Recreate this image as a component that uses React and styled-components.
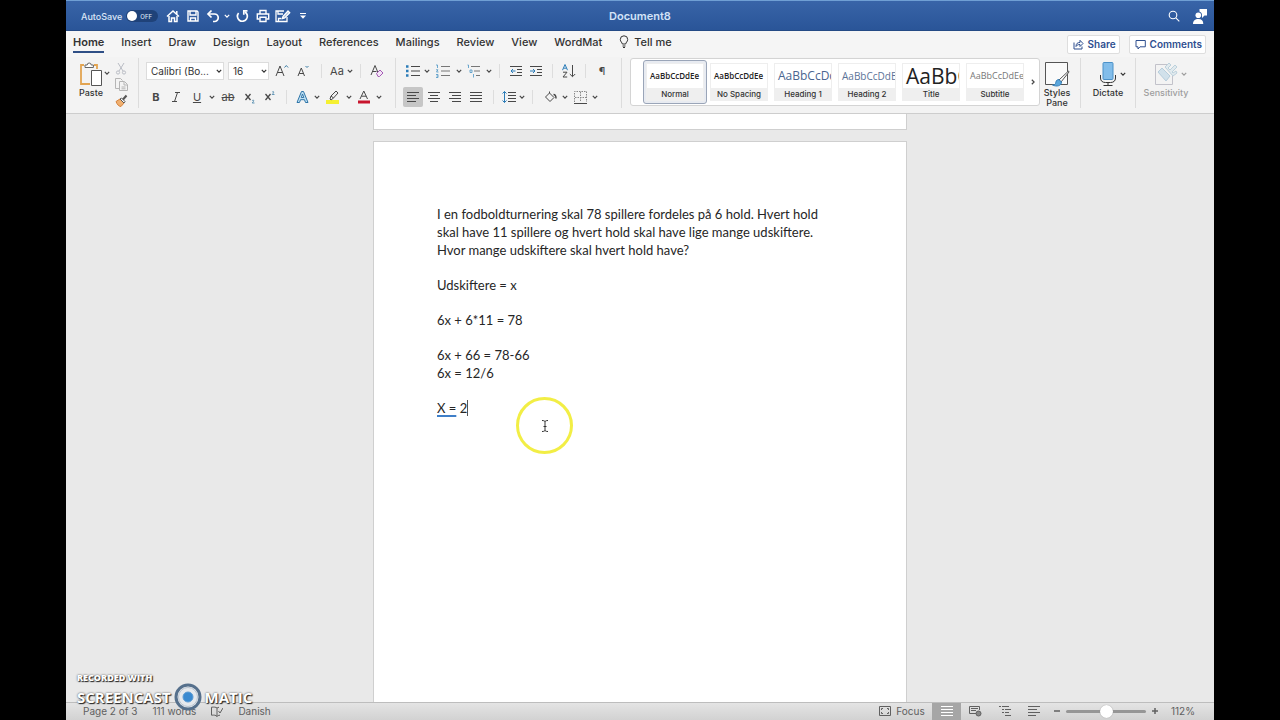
import React, { useState } from 'react';
import styled, { createGlobalStyle } from 'styled-components';

const GlobalStyle = createGlobalStyle`
    * {
        box-sizing: border-box;
    }

    body {
        margin: 0;
        background: #000000;
        font-family: Inter, "Liberation Sans", sans-serif;
    }

    button, select, input {
        margin: 0;
        padding: 0;
        border: 0;
        background: none;
        color: inherit;
        font: inherit;
    }
`;

const Screen = styled.div`
    height: 100vh;
    padding: 0 66px;
    overflow: hidden;
`;

const Window = styled.div`
    position: relative;
    display: flex;
    flex-direction: column;
    height: 100%;
    background: #e9e9e9;
    color: #333333;
`;

// title bar

const TitleBar = styled.header`
    display: grid;
    grid-template-columns: 1fr auto 1fr;
    align-items: center;
    height: 31px;
    padding: 1px 4px 0;
    border-top: 1px solid #6f9fd4;
    border-bottom: 1px solid #244a85;
    background: linear-gradient(#3864a8, #2a5598);
    color: #ffffff;
`;

const QuickAccess = styled.div`
    display: flex;
    align-items: center;
    padding-left: 11px;
`;

const AutoSave = styled.label`
    display: flex;
    align-items: center;
    gap: 4px;
    margin-right: 5px;
    font-size: 9px;
    font-weight: 500;
    color: #dbe6f6;
`;

const Track = styled.span`
    display: flex;
    align-items: center;
    gap: 3px;
    width: 32px;
    height: 12px;
    padding: 0 1px;
    border-radius: 6px;
    background: #1f4279;
    font-size: 6px;
`;

const Knob = styled.input`
    appearance: none;
    width: 10px;
    height: 10px;
    border-radius: 50%;
    background: #ffffff;
`;

const DocumentTitle = styled.h1`
    margin: 0;
    font-size: 11px;
    font-weight: 600;
    color: #d3e3f8;
`;

const TitleActions = styled.div`
    display: flex;
    justify-content: flex-end;
    gap: 6px;
`;

// tabs

const TabBar = styled.div`
    display: flex;
    align-items: center;
    justify-content: space-between;
    height: 26px;
    padding: 0 8px 0 7px;
    background: #f5f5f5;
`;

const Tabs = styled.nav`
    display: flex;
    gap: 17px;
    height: 100%;
`;

const Tab = styled.a`
    display: flex;
    align-items: center;
    gap: 5px;
    height: 22px;
    padding-top: 1px;
    border-bottom: 2px solid ${(props) => (props.$active ? '#2f4f86' : 'transparent')};
    font-size: 11px;
    font-weight: ${(props) => (props.$active ? 600 : 500)};
    color: #333333;
    text-decoration: none;
    white-space: nowrap;
`;

const TabActions = styled.div`
    display: flex;
    gap: 9px;
`;

const ActionButton = styled.button`
    display: flex;
    align-items: center;
    gap: 4px;
    height: 19px;
    padding: 0 3px 0 5px;
    border: 1px solid #dedede;
    border-radius: 2px;
    background: #ffffff;
    font-size: 10px;
    font-weight: 600;
    color: #2f4f8f;
`;

// ribbon

const Ribbon = styled.div`
    display: flex;
    height: 57px;
    padding: 1px 0 0 13px;
    border-bottom: 1px solid #cdcdcd;
    background: #f3f3f3;
`;

const Separator = styled.div`
    flex: none;
    width: 1px;
    height: 50px;
    background: #dcdcdc;
`;

const Clipboard = styled.div`
    display: flex;
    align-items: flex-start;
    width: 59px;
`;

const ClipboardSide = styled.div`
    display: flex;
    flex-direction: column;
    gap: 2px;
    padding: 3px 0 0 3px;
`;

const BigButton = styled.button`
    flex: none;
    display: flex;
    flex-direction: column;
    align-items: center;
    width: ${(props) => props.$width}px;
    padding-top: 2px;
    font-size: 9px;
    line-height: 10px;
    font-weight: 500;
    opacity: ${(props) => (props.$disabled ? 0.45 : 1)};
`;

const BigIcon = styled.span`
    display: grid;
    grid-template-columns: 1fr auto 1fr;
    align-items: center;
    gap: 3px;
    height: 28px;

    svg:first-child {
        grid-column: 2;
    }
`;

const PaneHolder = styled.div`
    flex: none;
    width: 40px;
`;

const Group = styled.div`
    flex: none;
    display: flex;
    flex-direction: column;
    gap: 6px;
    width: ${(props) => props.$width}px;
    padding: 3px 0 0 7px;
`;

const ToolRow = styled.div`
    display: flex;
    align-items: center;
    height: 20px;
`;

const Tool = styled.button`
    flex: none;
    display: flex;
    align-items: center;
    justify-content: center;
    width: ${(props) => props.$width || 20}px;
    height: ${(props) => props.$height || 20}px;
    border-radius: 2px;
    background: ${(props) => (props.$active ? '#c6c6c6' : 'none')};
    color: #484848;
    font-size: 11px;
`;

const Divider = styled.span`
    flex: none;
    width: 1px;
    height: 14px;
    margin: 0 6px;
    background: #dddddd;
`;

const SelectBox = styled.label`
    display: flex;
    align-items: center;
    width: ${(props) => props.$width}px;
    height: 18px;
    margin-right: 4px;
    padding-right: 1px;
    border: 1px solid #dcdcdc;
    background: #ffffff;
`;

const Select = styled.select`
    appearance: none;
    flex: 1;
    min-width: 0;
    padding-left: 4px;
    font-size: 10px;
    outline: none;
`;

const Gallery = styled.div`
    flex: none;
    display: flex;
    align-items: center;
    height: 48px;
    margin-left: 8px;
    padding-left: 12px;
    border: 1px solid #d4d4d4;
    border-radius: 3px;
    background: #ffffff;
`;

const StyleButton = styled.button`
    display: flex;
    flex-direction: column;
    width: 64px;
    height: 44px;
    padding: 2px;
    border: 1px solid ${(props) => (props.$active ? '#9aa5b8' : 'transparent')};
    border-radius: 3px;
    background: ${(props) => (props.$active ? '#e8ebf1' : 'none')};
`;

const Preview = styled.span`
    display: flex;
    align-items: center;
    width: 100%;
    height: 25px;
    padding-left: 3px;
    border: 1px solid #eeeeee;
    border-bottom: 0;
    background: #ffffff;
    color: ${(props) => props.$color};
    font-family: "Open Sans", sans-serif;
    font-size: ${(props) => props.$size}px;
    font-weight: ${(props) => props.$weight};
    line-height: 24px;
    white-space: nowrap;
    overflow: hidden;
`;

const StyleName = styled.span`
    width: 100%;
    height: 13px;
    background: #efefef;
    font-size: 8px;
    line-height: 12px;
    font-weight: 500;
    text-align: center;
`;

// document

const Canvas = styled.main`
    position: relative;
    flex: 1;
    min-height: 0;
    display: flex;
    flex-direction: column;
    align-items: center;
    gap: 11px;
    overflow: hidden;
`;

const PageEnd = styled.div`
    flex: none;
    width: 534px;
    height: 16px;
    border: 1px solid #cfcfcf;
    border-top: 0;
    background: #ffffff;
`;

const Page = styled.article`
    flex: 1;
    width: 534px;
    padding: 63px 63px 0;
    border: 1px solid #cfcfcf;
    border-bottom: 0;
    background: #ffffff;
    color: #262626;
    font-family: Lato, "Open Sans", sans-serif;
    font-size: 13px;
    line-height: 18px;
`;

const Paragraph = styled.p`
    margin: 0 0 17px;
    white-space: pre-line;
`;

const Grammar = styled.span`
    text-decoration: underline 2px #3f7fc8;
    text-underline-offset: 2px;
    text-decoration-skip-ink: none;
`;

const Caret = styled.span`
    border-right: 1px solid #555555;
`;

const Pointer = styled.div`
    position: absolute;
    top: 283px;
    left: 450px;
    display: flex;
    align-items: center;
    justify-content: center;
    width: 57px;
    height: 57px;
    border: 3px solid #f2ee45;
    border-radius: 50%;
`;

// status bar

const StatusBar = styled.footer`
    display: flex;
    align-items: center;
    justify-content: space-between;
    height: 18px;
    padding: 0 19px 0 17px;
    border-top: 1px solid #bdbdbd;
    background: linear-gradient(#e4e4e4, #d2d2d2);
    color: #606060;
    font-size: 10px;
`;

const StatusGroup = styled.div`
    display: flex;
    align-items: center;
    height: 100%;
    gap: ${(props) => props.$gap || 0}px;
`;

const StatusButton = styled.button`
    display: flex;
    align-items: center;
    justify-content: center;
    gap: 5px;
    width: ${(props) => (props.$width ? `${props.$width}px` : 'auto')};
    height: 100%;
    padding-bottom: 1px;
    background: ${(props) => (props.$active ? '#a6a6a6' : 'none')};
    color: ${(props) => (props.$active ? '#ffffff' : '#606060')};
    white-space: nowrap;
`;

const ZoomSlider = styled.input`
    appearance: none;
    width: 80px;
    height: 12px;

    &::-webkit-slider-runnable-track {
        height: 3px;
        border-radius: 2px;
        background: #969696;
    }

    &::-webkit-slider-thumb {
        appearance: none;
        width: 13px;
        height: 13px;
        margin-top: -5px;
        border-radius: 50%;
        background: #ffffff;
        box-shadow: 0 0 1px #888888;
    }
`;

const ZoomValue = styled.span`
    width: 31px;
    padding-bottom: 1px;
    text-align: right;
`;

const Watermark = styled.div`
    position: absolute;
    left: 11px;
    bottom: 9px;
    color: #ffffff;
    font-family: "Open Sans", sans-serif;
    text-shadow: 1px 1px 1px #222222, 0 0 2px #444444;
    pointer-events: none;
`;

const WatermarkTop = styled.div`
    font-size: 9px;
    line-height: 10px;
    font-weight: 800;
`;

const WatermarkName = styled.div`
    display: flex;
    align-items: center;
    gap: 3px;
    height: 28px;
    font-size: 15px;
    font-weight: 700;
`;

const Svg = styled.svg`
    flex: none;
    display: block;
    fill: none;
    stroke: currentColor;
    stroke-width: ${(props) => props.$stroke || 1};
`;

function Icon({ w = 16, h = 16, stroke, children }) {
    return (
        <Svg width={w} height={h} viewBox={`0 0 ${w} ${h}`} $stroke={stroke} aria-hidden="true">
            {children}
        </Svg>
    );
}

function Chevron() {
    return <Icon w={6} h={6} stroke={1.2}><path d="M.8 1.8 3 4.1l2.2-2.3" /></Icon>;
}

function More({ label, height }) {
    return <Tool $width={8} $height={height} aria-label={`${label} options`}><Chevron /></Tool>;
}

const styles = [
    { name: 'Normal', color: '#222222', size: 8, weight: 600 },
    { name: 'No Spacing', color: '#222222', size: 8, weight: 600 },
    { name: 'Heading 1', color: '#4a6590', size: 12, weight: 400 },
    { name: 'Heading 2', color: '#5b7398', size: 10, weight: 400 },
    { name: 'Title', color: '#222222', size: 21, weight: 400 },
    { name: 'Subtitle', color: '#777777', size: 9, weight: 400 },
];

const tabs = ['Home', 'Insert', 'Draw', 'Design', 'Layout', 'References', 'Mailings', 'Review', 'View', 'WordMat'];

function Title() {
    return (
        <TitleBar>
            <QuickAccess>
                <AutoSave>
                    AutoSave
                    <Track><Knob type="checkbox" role="switch" />OFF</Track>
                </AutoSave>
                <Tool aria-label="Home">
                    <Icon w={14} h={14} stroke={1.5}><g stroke="#fff"><path d="M1 7.5 7 2l6 5.5M10.8 2v3" /><path d="M3 7v5.5h2.5V9h3v3.5H11V7" /></g></Icon>
                </Tool>
                <Tool aria-label="Save">
                    <Icon w={12} h={12} stroke={1.4}><g stroke="#fff"><path d="M1 1h9l1 1v9H1z" /><path d="M3 1v4h6V1M3.5 11V8h5v3" /></g></Icon>
                </Tool>
                <Tool aria-label="Undo">
                    <Icon w={14} h={14} stroke={1.7}><g stroke="#fff"><path d="M5.5 1.5 2 5l3.5 3.5" /><path d="M2 5h6.5a3.5 3.5 0 0 1 0 7.5H7" /></g></Icon>
                </Tool>
                <Tool $width={8} aria-label="Undo options">
                    <Icon w={6} h={6} stroke={1.2}><path stroke="#fff" d="M.8 1.8 3 4.1l2.2-2.3" /></Icon>
                </Tool>
                <Tool $width={22} aria-label="Redo">
                    <Icon w={14} h={14} stroke={1.7}><g stroke="#fff"><path d="M3.6 4A5 5 0 1 0 10 3" /><path d="M12.5 1.8H8.8v4" /></g></Icon>
                </Tool>
                <Tool aria-label="Print">
                    <Icon w={14} h={14} stroke={1.4}><g stroke="#fff"><path d="M4 5V1.5h6V5M3.5 10H1.3V5h11.4v5h-2.2" /><path d="M4 8.2h6v4.3H4z" /></g></Icon>
                </Tool>
                <Tool aria-label="Edit">
                    <Icon w={16} h={14} stroke={1.3}><g stroke="#fff"><path d="M9 2H1v10.5h11V8M3 2v3h5M3.5 12.5v-3h3" /><path d="m7.5 9.5.6-2.3L13 2l1.7 1.7-5 5.2z" fill="#fff" fillOpacity=".6" /></g></Icon>
                </Tool>
                <Tool aria-label="Customize toolbar">
                    <Icon w={8} h={8}><path stroke="#fff" d="M1 1.5h6" /><path d="M1 3.5h6L4 6.8z" fill="#fff" stroke="none" /></Icon>
                </Tool>
            </QuickAccess>
            <DocumentTitle>Document8</DocumentTitle>
            <TitleActions>
                <Tool aria-label="Search">
                    <Icon w={12} h={12} stroke={1.1}><g stroke="#fff"><circle cx="5" cy="5" r="3.8" /><path d="m7.8 7.8 3.5 3.5" /></g></Icon>
                </Tool>
                <Tool aria-label="Account">
                    <Icon w={14} h={15}><g fill="#fff" stroke="none"><path d="M6.5 0H14v6.5h-2.5L9 9V6.5a4 4 0 0 0-2.5-4z" /><circle cx="5.3" cy="6.3" r="2.8" /><path d="M0 15c0-3.5 2-5 5.3-5s5 1.5 5 5z" /></g></Icon>
                </Tool>
            </TitleActions>
        </TitleBar>
    );
}

function TabStrip() {
    return (
        <TabBar>
            <Tabs>
                {tabs.map((tab, i) => (
                    <Tab key={tab} href={`#${tab}`} $active={i === 0}>{tab}</Tab>
                ))}
                <Tab href="#tell-me">
                    <Icon w={10} h={13}><path d="M3.3 9c0-1.5-2-2.3-2-4.5a3.7 3.7 0 0 1 7.4 0c0 2.2-2 3-2 4.5zM3.5 11h3M4 12.5h2" /></Icon>
                    Tell me
                </Tab>
            </Tabs>
            <TabActions>
                <ActionButton>
                    <Icon w={11} h={11}><path d="M1 3.5V10h8V7.5M3 7.5c0-3 1.5-4 4-4V1.3l3 3.2-3 3v-2C5 5.5 4 6 3 7.5z" /></Icon>
                    Share
                </ActionButton>
                <ActionButton>
                    <Icon w={11} h={11}><path d="M1 1.5h9.3v6.3H5L3 10V7.8H1z" /></Icon>
                    Comments
                </ActionButton>
            </TabActions>
        </TabBar>
    );
}

function ClipboardGroup() {
    return (
        <Clipboard>
            <BigButton $width={24}>
                <BigIcon>
                    <Icon w={24} h={26}>
                        <path d="M5 4H2v19h9M15 4h3v4" stroke="#e3a552" strokeWidth="1.8" />
                        <path d="M6 6.5V4h2.2a2 2 0 0 1 4 0h2.2v2.5z" fill="#fff" stroke="#666" />
                        <path d="M12.5 9.5h10v15h-10z" fill="#fff" stroke="#555" />
                    </Icon>
                </BigIcon>
                Paste
            </BigButton>
            <More label="Paste" height={30} />
            <ClipboardSide>
                <Tool $width={14} $height={14} aria-label="Cut">
                    <Icon w={12} h={13}><g stroke="#b9bcc4"><path d="M3 1l5 8M9 1 4 9" /><circle cx="3" cy="10.5" r="1.6" /><circle cx="9" cy="10.5" r="1.6" /></g></Icon>
                </Tool>
                <Tool $width={14} $height={14} aria-label="Copy">
                    <Icon w={13} h={13}><g stroke="#b5b5b5"><path d="M4.5 10.5h-4V.5h5l2 2" /><path d="M4.5 3.5h5l3 3v6h-8zM9 4v3h3M6.5 9h4M6.5 10.8h4" /></g></Icon>
                </Tool>
                <Tool $width={14} $height={14} aria-label="Format painter">
                    <Icon w={13} h={13}><path d="M1 7.5 5 5l4 4-3 3.5c-2 0-4-2-5-5z" fill="#f0b070" stroke="#d5823d" /><path d="m5 5 1.5-1L10 7.5 9 9z" fill="#fff" stroke="#555" /><path d="M8 5.5 11.5 1.5" stroke="#555" strokeWidth="2" /></Icon>
                </Tool>
            </ClipboardSide>
        </Clipboard>
    );
}

function FontGroup() {
    return (
        <Group $width={256}>
            <ToolRow>
                <SelectBox $width={78}>
                    <Select aria-label="Font"><option>Calibri (Bo...</option></Select>
                    <Chevron />
                </SelectBox>
                <SelectBox $width={41}>
                    <Select aria-label="Font size"><option>16</option></Select>
                    <Chevron />
                </SelectBox>
                <Tool $width={18} aria-label="Increase font size">
                    <Icon w={14} h={14}><path d="M1 12 5 2l4 10M2.5 8.5h5" /><path d="m9.5 3.5 1.8-2 1.8 2" stroke="#3d7ea6" /></Icon>
                </Tool>
                <Tool $width={24} aria-label="Decrease font size">
                    <Icon w={14} h={14}><path d="M2 12 5.3 4l3.2 8M3.2 9.5h4.2" /><path d="m9.5 2 1.5 1.5L12.5 2" stroke="#3d7ea6" /></Icon>
                </Tool>
                <Divider />
                <Tool $width={18}>Aa</Tool>
                <More label="Change case" />
                <Divider />
                <Tool aria-label="Clear formatting">
                    <Icon w={14} h={14}><path d="M1 11 5 1.5 9 11M2.5 7.5h4" /><path d="m6.5 9.5 3.5-3.5 3 3-3.5 3.5H8z" fill="#f3e4f6" stroke="#a45bb5" /></Icon>
                </Tool>
            </ToolRow>
            <ToolRow>
                <Tool><b>B</b></Tool>
                <Tool aria-label="Italic"><Icon w={10} h={12}><path d="M4 1.5h5M1 10.5h5M6.5 1.5l-3 9" /></Icon></Tool>
                <Tool $width={22}><u>U</u></Tool>
                <More label="Underline" />
                <Tool $width={24}><s>ab</s></Tool>
                <Tool aria-label="Subscript">
                    <Icon w={12} h={14}><path d="m1.5 4 5 6M6.5 4l-5 6" strokeWidth="1.3" /><path d="M8.2 10.5c2-1.2 2 .6 0 2.5h2.3" strokeWidth=".8" stroke="#3d7ea6" /></Icon>
                </Tool>
                <Tool aria-label="Superscript">
                    <Icon w={12} h={14}><path d="m1.5 4 5 6M6.5 4l-5 6" strokeWidth="1.3" /><path d="M8.2 2c2-1.2 2 .6 0 2.5h2.3" strokeWidth=".8" stroke="#3d7ea6" /></Icon>
                </Tool>
                <Divider />
                <Tool aria-label="Text effects">
                    <Icon w={14} h={14}><path d="M1 12.5 5.5 1.5h2L12 12.5H9.5l-1-2.8h-4l-1 2.8zM5.3 7.5h2.5L6.5 4z" fill="#bfe0f4" stroke="#2e75a8" /></Icon>
                </Tool>
                <More label="Text effects" />
                <Tool $width={24} aria-label="Highlight">
                    <Icon w={14} h={14}><path d="M0 10h13v4H0z" fill="#f5f032" stroke="none" /><path d="m4 9 1-3 5-5 2 2-4.5 5L5 10zM5 6l2.5 2" fill="#eee" /></Icon>
                </Tool>
                <More label="Highlight" />
                <Tool $width={22} aria-label="Font color">
                    <Icon w={14} h={14}><path d="m3 9 3.8-8L10.5 9M4.5 6.2h4.7" /><path d="M1 10.5h12v3H1z" fill="#c8152d" stroke="none" /></Icon>
                </Tool>
                <More label="Font color" />
            </ToolRow>
        </Group>
    );
}

function ParagraphGroup() {
    return (
        <Group $width={225}>
            <ToolRow>
                <Tool aria-label="Bullets">
                    <Icon w={14} h={14}><path d="M5 2.5h9M5 7h9M5 11.5h9" /><path d="M0 2.5h2.5M0 7h2.5M0 11.5h2.5" stroke="#2b7cb8" strokeWidth="2.5" /></Icon>
                </Tool>
                <More label="Bullets" />
                <Tool $width={24} aria-label="Numbering">
                    <Icon w={14} h={14}><path d="M5 2.5h9M5 7h9M5 11.5h9" stroke="#777" /><path d="M0 1h1.5v3M0 5.8h2L.5 8h2M0 10.5h2v3H0M.5 12H2" stroke="#4a94c4" strokeWidth=".8" /></Icon>
                </Tool>
                <More label="Numbering" />
                <Tool $width={22} aria-label="Multilevel list">
                    <Icon w={14} h={14}><path d="M4 2.5h9M7 7h6M9 11.5h4" stroke="#777" /><path d="M.5 1h1v3M3 6h2v2.5H3zM6.5 10v3.5" stroke="#4a94c4" strokeWidth=".8" /></Icon>
                </Tool>
                <More label="Multilevel list" />
                <Divider />
                <Tool aria-label="Decrease indent">
                    <Icon w={12} h={12}><path d="M0 1.5h12M7 4.5h5M7 7.5h5M0 10.5h12" /><path d="M5.5 6H1M3 4 1 6l2 2" stroke="#2b7cb8" /></Icon>
                </Tool>
                <Tool aria-label="Increase indent">
                    <Icon w={12} h={12}><path d="M0 1.5h12M7 4.5h5M7 7.5h5M0 10.5h12" /><path d="M0 6h5M3 4l2 2-2 2" stroke="#2b7cb8" /></Icon>
                </Tool>
                <Divider />
                <Tool aria-label="Sort">
                    <Icon w={14} h={14}><path d="M.5 6.2 3 .5l2.5 5.7M1.5 4.2h3" stroke="#2b7cb8" /><path d="M1 8.2h4L1 13h4.2M10.5 1v11.5M7.8 10l2.7 2.7 2.7-2.7" /></Icon>
                </Tool>
                <Divider />
                <Tool>¶</Tool>
            </ToolRow>
            <ToolRow>
                <Tool $active aria-label="Align left"><Icon w={12} h={12}><path d="M0 1.5h12M0 4.5h9M0 7.5h12M0 10.5h9" /></Icon></Tool>
                <Tool $width={22} aria-label="Center"><Icon w={12} h={12}><path d="M0 1.5h12M2 4.5h8M0 7.5h12M2 10.5h8" /></Icon></Tool>
                <Tool aria-label="Align right"><Icon w={12} h={12}><path d="M0 1.5h12M3 4.5h9M0 7.5h12M3 10.5h9" /></Icon></Tool>
                <Tool $width={22} aria-label="Justify"><Icon w={12} h={12}><path d="M0 1.5h12M0 4.5h12M0 7.5h12M0 10.5h12" /></Icon></Tool>
                <Divider />
                <Tool $width={18} aria-label="Line spacing">
                    <Icon w={14} h={14}><path d="M6 2.5h8M6 5.5h8M6 8.5h8M6 11.5h8" /><path d="M2.5 1.5v11M.5 3.5l2-2 2 2M.5 10.5l2 2 2-2" stroke="#2b7cb8" /></Icon>
                </Tool>
                <More label="Line spacing" />
                <Divider />
                <Tool $width={22} aria-label="Shading">
                    <Icon w={13} h={13}><path d="m1.5 6 4-4L10 6.5l-4 4zM5.5 2V.5" /><path d="M9.5 3.5c2 0 2.5 1.5 2.5 4" strokeWidth="1.5" /></Icon>
                </Tool>
                <More label="Shading" />
                <Tool $width={22} aria-label="Borders">
                    <Icon w={13} h={13}><path d="M.5 11V.5h12V11M6.5 1v10M1 6.5h11" strokeDasharray="1.5 1" stroke="#888" /><path d="M0 12.5h13" /></Icon>
                </Tool>
                <More label="Borders" />
            </ToolRow>
        </Group>
    );
}

function StyleGallery() {
    const [selected, setSelected] = useState('Normal');

    return (
        <Gallery>
            {styles.map((s) => (
                <StyleButton key={s.name} $active={selected === s.name} onClick={() => setSelected(s.name)}>
                    <Preview $color={s.color} $size={s.size} $weight={s.weight}>AaBbCcDdEe</Preview>
                    <StyleName>{s.name}</StyleName>
                </StyleButton>
            ))}
            <Tool $width={12} aria-label="More styles"><Icon w={6} h={6} stroke={1.2}><path d="m1.8.8 2.3 2.2-2.3 2.2" /></Icon></Tool>
        </Gallery>
    );
}

function StatusLine() {
    return (
        <StatusBar>
            <StatusGroup $gap={15}>
                <StatusButton>Page 2 of 3</StatusButton>
                <StatusButton>111 words</StatusButton>
                <StatusButton aria-label="Proofing">
                    <Icon w={12} h={11}><path d="M6 2v8.5M6 2C5 1 3 1 .5 1.2v8C3 9 5 9 6 10.5c.5-.8 1.5-1.2 3-1.3M6 2l2-.8M7.5 5 9 7l3-5" /></Icon>
                </StatusButton>
                <StatusButton>Danish</StatusButton>
            </StatusGroup>
            <StatusGroup>
                <StatusButton $width={60}>
                    <Icon w={12} h={10}><path d="M.5.5h11v9H.5z" /><path d="M2.5 4V2.5H4M8 2.5h1.5V4M9.5 6v1.5H8M4 7.5H2.5V6" /></Icon>
                    Focus
                </StatusButton>
                <StatusButton $active $width={29} aria-label="Print layout"><Icon w={12} h={12}><path d="M0 1.5h12M0 4.5h12M0 7.5h12M0 10.5h12" /></Icon></StatusButton>
                <StatusButton $width={29} aria-label="Web layout">
                    <Icon w={13} h={12}><path d="M7 8.5H.5v-7h10V5M2 3.5h7M2 5.5h5" /><circle cx="9.5" cy="8.5" r="2.5" fill="#888" /></Icon>
                </StatusButton>
                <StatusButton $width={29} aria-label="Outline"><Icon w={12} h={12}><path d="M0 1.5h2M3 1.5h7M3 4.5h2M6 4.5h6M3 7.5h2M6 7.5h4M6 10.5h6" /></Icon></StatusButton>
                <StatusButton $width={29} aria-label="Draft"><Icon w={12} h={12}><path d="M0 1.5h12M0 4.5h9M0 7.5h12M0 10.5h8" /></Icon></StatusButton>
                <StatusButton $width={18} aria-label="Zoom out"><Icon w={8} h={8} stroke={1.5}><path d="M1 4h6" /></Icon></StatusButton>
                <ZoomSlider type="range" min="0" max="100" defaultValue="51" aria-label="Zoom" />
                <StatusButton $width={18} aria-label="Zoom in"><Icon w={8} h={8} stroke={1.5}><path d="M1 4h6M4 1v6" /></Icon></StatusButton>
                <ZoomValue>112%</ZoomValue>
            </StatusGroup>
        </StatusBar>
    );
}

function App() {
    return (
        <Screen>
            <GlobalStyle />
            <Window>
                <Title />
                <TabStrip />
                <Ribbon>
                    <ClipboardGroup />
                    <Separator />
                    <FontGroup />
                    <Separator />
                    <ParagraphGroup />
                    <Separator />
                    <StyleGallery />
                    <PaneHolder>
                        <BigButton $width={34}>
                            <BigIcon>
                                <Icon w={26} h={26}>
                                    <path d="M1.5 1.5h22v22h-22z" fill="#fafafa" stroke="#555" />
                                    <path d="M24.5 10 15 19l2 2 8-10z" fill="#fff" stroke="#555" />
                                    <path d="M15 18.5c-3 0-3 2.5-3.5 4-.5 1-1.5 1.5-3 1.5 4 2 9 1 9-3z" fill="#5ba6dc" stroke="#3780b8" />
                                </Icon>
                            </BigIcon>
                            Styles<br />Pane
                        </BigButton>
                    </PaneHolder>
                    <Separator />
                    <BigButton $width={54}>
                        <BigIcon>
                            <Icon w={18} h={26}>
                                <rect x="4" y="1.5" width="10" height="17" rx="1" fill="#82bdea" stroke="#4b91c8" />
                                <path d="M1.5 14v3c0 3 2 4.5 5 4.5h5c3 0 5-1.5 5-4.5v-3M9 21.5v3M4.5 24.5h9" />
                            </Icon>
                            <Chevron />
                        </BigIcon>
                        Dictate
                    </BigButton>
                    <Separator />
                    <BigButton $width={60} $disabled>
                        <BigIcon>
                            <Icon w={24} h={26}>
                                <path d="M15 3.5H1.5v20h17V15" stroke="#889" />
                                <path d="m4 11 4-4 8 8-4 5z" fill="#a9cce2" stroke="#6da0c0" />
                                <path d="m11 6 4-4 2 2-3 3 2 2 5-5 2 2-5 5 1 1 3-2 1 2-4 3z" fill="#cde0ea" stroke="#7aa8c2" />
                            </Icon>
                            <Chevron />
                        </BigIcon>
                        Sensitivity
                    </BigButton>
                </Ribbon>
                <Canvas>
                    <PageEnd />
                    <Page>
                        <Paragraph>
                            I en fodboldturnering skal 78 spillere fordeles på 6 hold. Hvert hold skal have 11 spillere og hvert hold skal have lige mange udskiftere. Hvor mange udskiftere skal hvert hold have?
                        </Paragraph>
                        <Paragraph>Udskiftere = x</Paragraph>
                        <Paragraph>6x + 6*11 = 78</Paragraph>
                        <Paragraph>{'6x + 66 = 78-66\n6x = 12/6'}</Paragraph>
                        <Paragraph><Grammar>X =</Grammar> <Caret>2</Caret></Paragraph>
                    </Page>
                    <Pointer>
                        <Icon w={8} h={14}><path d="M1 1.5c2 0 3 .5 3 1.5 0-1 1-1.5 3-1.5M4 3v8M1 12.5c2 0 3-.5 3-1.5 0 1 1 1.5 3 1.5M2.5 7.5h3" /></Icon>
                    </Pointer>
                </Canvas>
                <StatusLine />
                <Watermark>
                    <WatermarkTop>RECORDED WITH</WatermarkTop>
                    <WatermarkName>
                        SCREENCAST
                        <Icon w={28} h={28}>
                            <circle cx="14" cy="14" r="12" fill="#e6e9ed" stroke="#56708c" strokeWidth="3" />
                            <circle cx="14" cy="14" r="9.5" stroke="#b9c4d0" />
                            <circle cx="14" cy="14" r="5" fill="#3b8ad0" stroke="#5d9bd3" />
                        </Icon>
                        MATIC
                    </WatermarkName>
                </Watermark>
            </Window>
        </Screen>
    );
}

export default App;
